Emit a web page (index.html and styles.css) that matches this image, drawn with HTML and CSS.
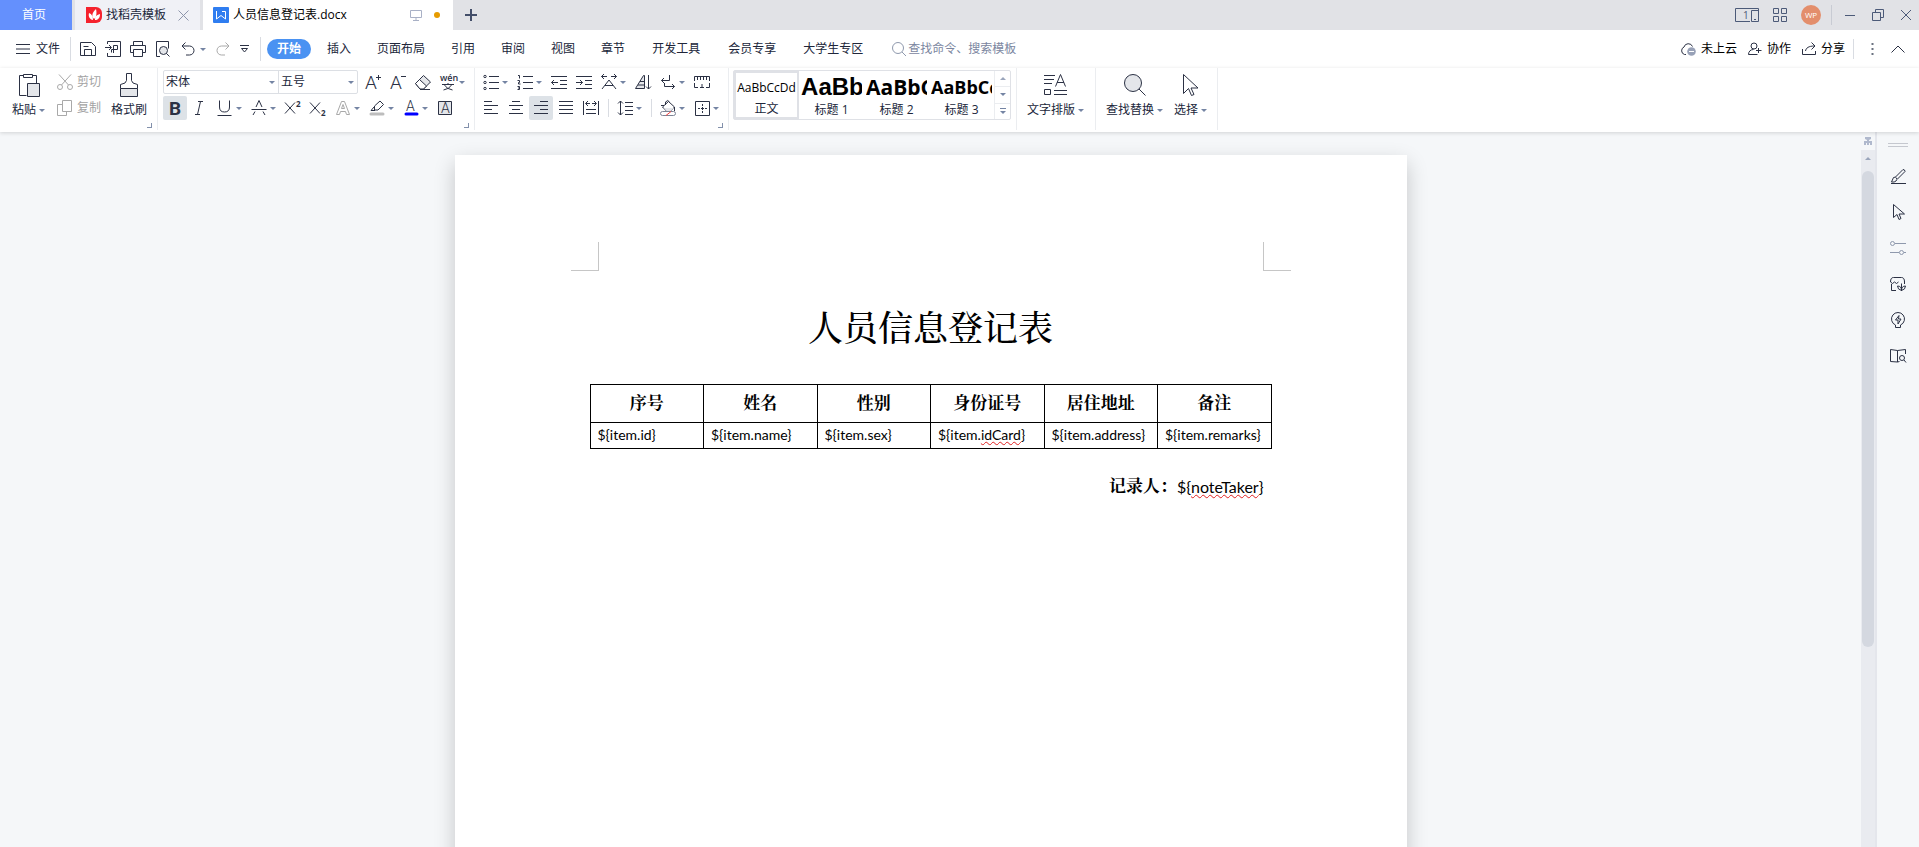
FILE: index.html
```html
<!DOCTYPE html>
<html lang="zh-CN">
<head>
  <meta charset="UTF-8" />
  <meta name="viewport" content="width=device-width, initial-scale=1.0" />
  <title>人员信息登记表.docx</title>
  <link rel="stylesheet" href="styles.css">
</head>
<body>
  <header class="titlebar">
    <button class="tab home">首页</button>
    <button class="tab template">
      <svg width="16" height="16" viewBox="0 0 16 16"><path d="M0 0h10a6 6 0 0 1 6 6v4a6 6 0 0 1-6 6H0z" fill="#f5222d"/><path d="M8 12C5 9 6.500 5 10 2c1 4 .5 8-2 10zM7 13C4 12.500 2 10 3 6c3 1 4 4 4 7zM9 13c0-3 1-5 5-6 0 4-2 6-5 6z" fill="#fff"/></svg>
      <span>找稻壳模板</span>
      <svg class="close" width="11" height="11" viewBox="0 0 11 11"><path d="M.5.5l10 10M10.500.5l-10 10" stroke="#8d95ab"/></svg>
    </button>
    <button class="tab active">
      <svg width="16" height="16" viewBox="0 0 16 16"><rect width="16" height="16" rx="1" fill="#2f7df0"/><path d="M3.500 4v8L8 8.500l4.500 3.500V4.500H9" fill="none" stroke="#fff"/></svg>
      <span class="name">人员信息登记表.docx</span>
      <svg width="12" height="12" viewBox="0 0 12 12" fill="none" stroke="#a9b1c6"><path d="M.5 1.500h11v7H.5zM6 8.500v3M3 11.500h6"/></svg>
      <i class="dot"></i>
    </button>
    <button class="plus" aria-label="新建"><svg width="12" height="12" viewBox="0 0 12 12"><path d="M6 0v12M0 6h12" stroke="#434e69" stroke-width="2"/></svg></button>
    <div class="window-tools">
      <svg width="24" height="14" viewBox="0 0 24 14" fill="none" stroke="#4c5a78"><path d="M15 13.500H.5V.5h23v13h-7v-11h7M19 11.500h2"/><text x="8" y="11" class="badge">1</text></svg>
      <svg width="14" height="14" viewBox="0 0 14 14" fill="none" stroke="#4c5a78"><path d="M.5.5h5v5h-5zM8.500.5h5v5h-5zM.5 8.500h5v5h-5zM8.500 8.500h5v5h-5z"/></svg>
      <span class="avatar">WP</span>
      <i class="line"></i>
      <button aria-label="最小化"><svg width="12" height="12" viewBox="0 0 12 12"><path d="M1 6.500h10" stroke="#4c5a78"/></svg></button>
      <button aria-label="还原"><svg width="12" height="12" viewBox="0 0 12 12" fill="none" stroke="#4c5a78"><path d="M.5 3.500h8v8h-8zM3.500 3V.5h8v8H9"/></svg></button>
      <button aria-label="关闭"><svg width="12" height="12" viewBox="0 0 12 12"><path d="M1 1l10 10M11 1L1 11" stroke="#4c5a78"/></svg></button>
    </div>
  </header>

  <nav class="menu">
    <button class="file"><svg width="14" height="10" viewBox="0 0 14 10"><path d="M0 .5h14M0 5h14M0 9.500h14"/></svg>文件</button>
    <i class="line"></i>
    <div class="quick">
      <button aria-label="保存"><svg width="16" height="16" viewBox="0 0 16 16"><path d="M.5 1.500h11l4 4v9H.5zM4.500 14.500v-6h7v6M3.500 5.500h5"/></svg></button>
      <button aria-label="输出为PDF"><svg width="16" height="16" viewBox="0 0 16 16"><path d="M2.500 3V.5h13v15h-13V12M0 6.500h6M4 4l2.500 2.500L4 9M8.500 12V4.500h4v4h-6v3"/></svg></button>
      <button aria-label="打印"><svg width="16" height="16" viewBox="0 0 16 16"><path d="M3.500 4.500v-4h9v4M3.500 11.500h-3v-7h15v7h-3M3.500 8.500h9v7h-9z"/></svg></button>
      <button aria-label="打印预览"><svg width="16" height="16" viewBox="0 0 16 16"><path d="M5 15.500H1.500V.5h12v7M11 12l3.500 3.500"/><circle cx="8.500" cy="9.500" r="4" fill="#e4e6ea"/></svg></button>
      <button aria-label="撤销" class="drop"><svg width="16" height="16" viewBox="0 0 16 16"><path d="M5.500 1.500L2 5l3.500 3.500M2 5h7.500a4.500 4.500 0 0 1 0 9H6"/></svg></button>
      <button aria-label="恢复"><svg class="off" width="16" height="16" viewBox="0 0 16 16"><path d="M10.500 1.500L14 5l-3.500 3.500M14 5H6.500a4.500 4.500 0 0 0 0 9H10"/></svg></button>
      <button aria-label="自定义"><svg width="9" height="8" viewBox="0 0 9 8"><path d="M0 .5h9M1.500 3.500L4.500 7l3-3.500z"/></svg></button>
    </div>
    <i class="line"></i>
    <div class="tabs">
      <button class="on">开始</button>
      <button>插入</button>
      <button>页面布局</button>
      <button>引用</button>
      <button>审阅</button>
      <button>视图</button>
      <button>章节</button>
      <button class="wide">开发工具</button>
      <button class="wide">会员专享</button>
      <button>大学生专区</button>
    </div>
    <label class="search">
      <svg class="lens" width="14" height="14" viewBox="0 0 14 14"><circle cx="6" cy="6" r="5.500"/><path d="M10 10l4 4"/></svg>
      <input type="text" placeholder="查找命令、搜索模板" aria-label="查找命令、搜索模板">
    </label>
    <div class="account">
      <button><svg width="16" height="14" viewBox="0 0 16 14"><path d="M6 12.500H4.500a4 4 0 0 1-.5-7.500 4.500 4.500 0 0 1 8.500-.5"/><circle cx="11.500" cy="9.500" r="4.300" fill="#98a1b7" stroke="none"/><path d="M9 9.500h5" class="white"/></svg>未上云</button>
      <button><svg width="14" height="14" viewBox="0 0 14 14"><circle cx="6" cy="4" r="3"/><path d="M9.500 12.500h-9c0-3 2-5 5-5M8 8.500h5.500M10.500 6v5"/></svg>协作</button>
      <button><svg width="14" height="14" viewBox="0 0 14 14"><path d="M.5 7v5.500h13V9M3.500 9c.5-3 3-5 9-5M9.500.5L13 4 9.500 7.500"/></svg>分享</button>
      <i class="line"></i>
      <button aria-label="更多"><svg width="3" height="12" viewBox="0 0 3 12"><path d="M.5 0h2v2h-2zM.5 5h2v2h-2zM.5 10h2v2h-2z" fill="#6b7280" stroke="none"/></svg></button>
      <button aria-label="收起功能区"><svg width="14" height="8" viewBox="0 0 14 8"><path d="M.5 7.500L7 1l6.500 6.500"/></svg></button>
    </div>
  </nav>

  <section class="ribbon">
    <div class="group clipboard">
      <button class="big">
        <svg width="24" height="24" viewBox="0 0 24 24"><path d="M9.500 22.500h-7v-20h4M15.500 2.500h4v8M6.500 1.500h9v3h-9z"/><path d="M10.500 10.500h12v13h-12z" fill="#e4e6ea"/></svg>
        <span class="drop">粘贴</span>
      </button>
      <div class="stack">
        <button class="off"><svg class="off" width="16" height="16" viewBox="0 0 16 16"><path d="M2 .5l9.500 10.500M14 .5L4.500 11"/><circle cx="3" cy="13" r="2.500"/><circle cx="13" cy="13" r="2.500"/></svg>剪切</button>
        <button class="off"><svg class="off" width="16" height="16" viewBox="0 0 16 16"><path d="M5.500.5h9v11h-9zM5 4.500H.5v11h9V12"/></svg>复制</button>
      </div>
      <button class="big">
        <svg width="18" height="24" viewBox="0 0 18 24"><path d="M.5 15.500h17v8H.5z" fill="#e4e6ea"/><path d="M.5 15.500v-4q6-1 6-4v-7h5v7q0 3 6 4v4"/></svg>
        <span>格式刷</span>
      </button>
      <i class="corner"></i>
    </div>

    <div class="group font">
      <div class="row">
        <div class="combo">
          <span class="pick family"><select aria-label="字体"><option>宋体</option></select></span>
          <span class="pick size"><select aria-label="字号"><option>五号</option></select></span>
        </div>
        <button class="tool" aria-label="增大字号"><svg width="16" height="16" viewBox="0 0 16 16"><text x="0" y="15" class="thin">A</text><path d="M11 3.500h5M13.500 1v5"/></svg></button>
        <button class="tool" aria-label="减小字号"><svg width="16" height="16" viewBox="0 0 16 16"><text x="0" y="15" class="thin">A</text><path d="M11 2.500h5"/></svg></button>
        <button class="tool" aria-label="清除格式"><svg width="16" height="16" viewBox="0 0 16 16"><path d="M.5 9.500l8-8 7 6.500-7 7H5z" fill="#e4e6ea"/><path d="M.5 9.500l4-4 7 6.500-3 3H5z" fill="#fff"/><path d="M5 15.500h10"/></svg></button>
        <button class="tool drop" aria-label="拼音指南"><svg width="16" height="16" viewBox="0 0 16 16"><text x="0" y="7" class="pinyin">wén</text><path d="M2 10.500h12M8 9v2M4.500 11q2 4 8 5M11.500 11q-2 4-8 5"/></svg></button>
      </div>
      <div class="row">
        <button class="tool on" aria-label="加粗"><svg width="16" height="16" viewBox="0 0 16 16"><text x="2" y="15" class="bold">B</text></svg></button>
        <button class="tool" aria-label="倾斜"><svg width="16" height="16" viewBox="0 0 16 16"><path d="M6 1.500h5M3 14.500h5M8.500 1.500l-3 13"/></svg></button>
        <button class="tool drop" aria-label="下划线"><svg width="16" height="16" viewBox="0 0 16 16"><path d="M2.500.5V7q0 5 5 5t5-5V.5M.5 15.500h14"/></svg></button>
        <button class="tool drop" aria-label="删除线"><svg width="16" height="16" viewBox="0 0 16 16"><path d="M5 7l3-6.500L11 7M.5 9.500h15M4 11.500l-2 3.500M12 11.500l2 3.500"/></svg></button>
        <button class="tool" aria-label="上标"><svg width="18" height="16" viewBox="0 0 18 16"><path d="M1 2.500l10 11M11 2.500L1 13.500"/><text x="12" y="7" class="script">2</text></svg></button>
        <button class="tool" aria-label="下标"><svg width="18" height="16" viewBox="0 0 18 16"><path d="M1 2.500l10 11M11 2.500L1 13.500"/><text x="12" y="16" class="script">2</text></svg></button>
        <button class="tool drop" aria-label="文字效果"><svg class="off" width="16" height="16" viewBox="0 0 16 16"><path d="M1.500 14.500l5-13h3l5 13h-3l-1-3h-5l-1 3zM6.500 8.500h3L8 4.500z"/></svg></button>
        <button class="tool drop" aria-label="突出显示"><svg width="16" height="16" viewBox="0 0 16 16"><path d="M5.500 6l5.500-5 3.500 3.500L9 10H5.500zM5 7l-3 3.500h4"/><path d="M2 14h12" class="gray-bar"/></svg></button>
        <button class="tool drop" aria-label="字体颜色"><svg width="16" height="16" viewBox="0 0 16 16"><text x="3" y="11" class="thin mid">A</text><path d="M3 14h11" class="blue-bar"/></svg></button>
        <button class="tool" aria-label="字符底纹"><svg width="16" height="16" viewBox="0 0 16 16"><path d="M1.500 1.500h13v13h-13z" fill="#e4e6ea"/><text x="4" y="13" class="thin mid">A</text></svg></button>
      </div>
      <i class="corner"></i>
    </div>

    <div class="group para">
      <div class="row">
        <button class="tool drop" aria-label="项目符号"><svg width="16" height="16" viewBox="0 0 16 16"><path d="M6 2.500h10M6 8.500h10M6 14.500h10"/><circle cx="2" cy="2.500" r="1.200"/><circle cx="2" cy="8.500" r="1.200"/><circle cx="2" cy="14.500" r="1.200"/></svg></button>
        <button class="tool drop" aria-label="编号"><svg width="16" height="16" viewBox="0 0 16 16"><path d="M6 2.500h10M6 8.500h10M6 14.500h10M1 1.500h1.500v3M.5 6.500h2v2h-1v1.500h2M.5 12.500h2v3h-2M1 14h1.500"/></svg></button>
        <button class="tool" aria-label="减少缩进"><svg width="16" height="16" viewBox="0 0 16 16"><path d="M0 2.500h16M9 6.500h7M9 10.500h7M0 14.500h16M.5 8.500H7M3 6L.5 8.500 3 11"/></svg></button>
        <button class="tool" aria-label="增加缩进"><svg width="16" height="16" viewBox="0 0 16 16"><path d="M0 2.500h16M9 6.500h7M9 10.500h7M0 14.500h16M0 8.500h6.500M4 6l2.500 2.500L4 11"/></svg></button>
        <button class="tool drop" aria-label="中文版式"><svg width="16" height="16" viewBox="0 0 16 16"><path d="M1 15l7-9 7 9M4 11.500h8M6 2.500H.5M3 0L.5 2.500 3 5M10 2.500h5.500M13 0l2.500 2.500L13 5"/></svg></button>
        <button class="tool" aria-label="排序"><svg width="16" height="16" viewBox="0 0 16 16"><path d="M.5 14.500l8-13h1v13zM5 7.500h4.500M3 11h6.500" fill="#e4e6ea"/><path d="M13.500 1v14M11 12.500l2.500 2.500 2.500-2.500"/></svg></button>
        <button class="tool drop" aria-label="显示段落标记"><svg width="16" height="16" viewBox="0 0 16 16"><path d="M9.500 1v5.500h-8M4 4L1.500 6.500 4 9M4.500 9v3.500h10M12 10l2.500 2.500L12 15"/></svg></button>
        <button class="tool" aria-label="制表位"><svg width="16" height="16" viewBox="0 0 16 16"><path d="M.5 7V2.500h15V7M3.500 3v3M6.500 3v3M9.500 3v3M12.500 3v3M.5 9v4.500H4M6 13.500h4M8 10v3M12 13.500h3.500V9"/></svg></button>
      </div>
      <div class="row">
        <button class="tool" aria-label="左对齐"><svg width="14" height="14" viewBox="0 0 14 14"><path d="M0 .5h8M0 4.500h14M0 8.500h8M0 12.500h14"/></svg></button>
        <button class="tool" aria-label="居中对齐"><svg width="14" height="14" viewBox="0 0 14 14"><path d="M3 .5h8M0 4.500h14M3 8.500h8M0 12.500h14"/></svg></button>
        <button class="tool on" aria-label="右对齐"><svg width="14" height="14" viewBox="0 0 14 14"><path d="M6 .5h8M0 4.500h14M6 8.500h8M0 12.500h14"/></svg></button>
        <button class="tool" aria-label="两端对齐"><svg width="14" height="14" viewBox="0 0 14 14"><path d="M0 .5h14M0 4.500h14M0 8.500h14M0 12.500h14"/></svg></button>
        <button class="tool" aria-label="分散对齐"><svg width="16" height="16" viewBox="0 0 16 16"><path d="M.5 1v14M15.500 1v14M3 9.500h10M3 13.500h10M3 3.500h4M9 3.500h4M5 1L2.500 3.500 5 6M11 1l2.500 2.500L11 6"/></svg></button>
        <i class="mini"></i>
        <button class="tool drop" aria-label="行距"><svg width="16" height="16" viewBox="0 0 16 16"><path d="M3.500 1v14M1 3.500L3.500 1 6 3.500M1 12.500L3.500 15 6 12.500M8 2.500h8M8 6.500h8M8 10.500h8M8 14.500h8"/></svg></button>
        <i class="mini"></i>
        <button class="tool drop" aria-label="底纹颜色"><svg width="16" height="16" viewBox="0 0 16 16"><path d="M2.500 7L8.500 1.500l6 5.500-4 4h-4z" fill="#fff"/><path d="M4 8h10l-3.500 3h-4z" fill="#e4e6ea" stroke="none"/><path d="M5.500 5V2q2.500-3 4 0M1 5.500h3M14.500 7v4"/><rect x=".5" y="11.500" width="15" height="4" rx="2" fill="#fff" class="slate"/><path d="M6 15.500l5-4" class="red"/></svg></button>
        <button class="tool drop" aria-label="边框"><svg width="16" height="16" viewBox="0 0 16 16"><path d="M1.500 1.500h14v14h-14zM8.500 4v2M8.500 7v3M8.500 11v2M4 8.500h2M7 8.500h3M11 8.500h2"/></svg></button>
      </div>
      <i class="corner"></i>
    </div>

    <div class="group styles">
      <div class="gallery">
        <button class="style on"><span class="sample">AaBbCcDd</span><span>正文</span></button>
        <button class="style"><span class="sample h1">AaBb</span><span>标题 1</span></button>
        <button class="style"><span class="sample h2">AaBbC</span><span>标题 2</span></button>
        <button class="style"><span class="sample h3">AaBbCc</span><span>标题 3</span></button>
        <div class="spin">
          <button class="up" aria-label="上一行"></button>
          <button class="down" aria-label="下一行"></button>
          <button class="down more" aria-label="更多样式"></button>
        </div>
      </div>
    </div>

    <div class="group layout">
      <button class="big">
        <svg width="24" height="24" viewBox="0 0 24 24"><path d="M0 2.500h11M0 6.500h10M0 10.500h8M.5 16.500h6v5h-6zM10 17.500h13M10 21.500h13M11.500 13.500l5-12 5 12M13 9.500h7"/></svg>
        <span class="drop">文字排版</span>
      </button>
    </div>

    <div class="group find">
      <button class="big">
        <svg width="24" height="24" viewBox="0 0 24 24"><circle cx="10" cy="10" r="8.500" fill="#e4e6ea"/><path d="M16 16l6.500 6.500"/></svg>
        <span class="drop">查找替换</span>
      </button>
      <button class="big">
        <svg width="24" height="24" viewBox="0 0 24 24"><path d="M4.500 1.500v19l5-5 3 7 2.500-1-3-6.500h7z"/></svg>
        <span class="drop">选择</span>
      </button>
    </div>
  </section>

  <main class="workspace">
    <div class="canvas">
      <article class="page">
        <div class="marks"><i class="mark left"></i><i class="mark right"></i></div>
        <h1>人员信息登记表</h1>
        <table>
          <tr>
            <th>序号</th>
            <th>姓名</th>
            <th>性别</th>
            <th>身份证号</th>
            <th>居住地址</th>
            <th>备注</th>
          </tr>
          <tr>
            <td>${item.id}</td>
            <td>${item.name}</td>
            <td>${item.sex}</td>
            <td>${item.<span class="typo">idCard</span>}</td>
            <td>${item.address}</td>
            <td>${item.remarks}</td>
          </tr>
        </table>
        <p class="recorder"><b>记录人：</b>${<span class="typo">noteTaker</span>}</p>
      </article>
    </div>
    <div class="scroll">
      <svg width="8" height="8" viewBox="0 0 8 8" fill="#b0b9cd"><path d="M1 0h6v2L5 3v1h3v4H6V6H5v2H3V6H2v2H0V4h3V3L1 2z"/></svg>
      <div class="track"><i class="up"></i><div class="thumb"></div></div>
    </div>
    <aside class="side">
      <i class="grip"></i>
      <button aria-label="样式"><svg width="16" height="16" viewBox="0 0 16 16"><path d="M1 15.500h15M1.500 14l2-4.500q2-1 3 .5t-.5 3-4.500 1zM5.500 9l7.500-7.500q2 0 2 2L7.500 11"/></svg></button>
      <button aria-label="选择"><svg width="16" height="16" viewBox="0 0 16 16"><path d="M3.500.5v13l3.500-3 2 5 2-1-2-4.500h5.500z"/></svg></button>
      <button aria-label="属性"><svg class="pale" width="16" height="16" viewBox="0 0 16 16"><circle cx="2.500" cy="3.500" r="2"/><circle cx="11.500" cy="12.500" r="2"/><path d="M5 3.500h11M0 12.500h9M14 12.500h2"/></svg></button>
      <button aria-label="稻壳"><svg width="16" height="16" viewBox="0 0 16 16"><path d="M.5 6q0-4.500 3-4.500h8q3 0 3 4.500M.5 6q2 3 4 0 2 3 4 0M1.500 8v6.500H6M14.500 5v3"/><path d="M11.500 15V7.500M11.500 14.500q-4-1-4-4.500 4 0 4 4.500 0-4.500 4-4.500 0 3.500-4 4.500"/></svg></button>
      <button aria-label="帮助"><svg width="16" height="16" viewBox="0 0 16 16"><path d="M5.500 15.500V13a6.500 6.500 0 1 1 5 0v2.500zM9 3.500L5.500 8H8v4l3-5H8.500z"/></svg></button>
      <button aria-label="阅读"><svg width="16" height="16" viewBox="0 0 16 16"><path d="M7.500 14l-7-.5V1.500l7 1zM7.500 2.500l8-1V6M7.500 14l2-.5"/><circle cx="12" cy="10" r="2.500"/><path d="M14 12l2 2.500"/></svg></button>
    </aside>
  </main>
</body>
</html>
```
FILE: styles.css
```css
* {
  box-sizing: border-box;
}
body {
  margin: 0;
  height: 100vh;
  display: flex;
  flex-direction: column;
  overflow: hidden;
  font-family: "Open Sans", "Noto Sans CJK SC", sans-serif;
  font-size: 12px;
  line-height: 16px;
  color: #20263a;
  background: #fff;
}
button, select, input {
  font: inherit;
  color: inherit;
  background: none;
  border: 0;
  padding: 0;
  margin: 0;
}
button {
  display: flex;
  align-items: center;
  flex: none;
  white-space: nowrap;
}
svg {
  flex: none;
  display: block;
  overflow: visible;
}
.menu svg, .ribbon svg, .side svg {
  fill: none;
  stroke: #2b3144;
}
.ribbon svg.off, .menu svg.off {
  stroke: #a9a9a9;
}
.side svg.pale, .menu svg.lens {
  stroke: #8f99ad;
}
.white {
  stroke: #fff;
}
.slate {
  stroke: #7d8496;
}
.red {
  stroke: #f04040;
}
.line {
  width: 1px;
  height: 24px;
  background: #d9dce2;
}

/* title bar */
.titlebar {
  display: flex;
  align-items: center;
  height: 30px;
  background: #e1e2e6;
}
.tab {
  height: 30px;
}
.home {
  width: 72px;
  padding-right: 4px;
  justify-content: center;
  color: #fff;
  background: #6490fd;
}
.template {
  width: 125px;
  margin: 0 3px;
  padding: 0 11px;
  gap: 4px;
  background: #f0f1f6;
}
.template .close {
  margin-left: auto;
}
.active {
  width: 250px;
  padding: 0 13px 0 10px;
  gap: 4px;
  color: #000;
  background: #fff;
}
.active .name {
  flex: 1;
  text-align: left;
}
.dot {
  width: 6px;
  height: 6px;
  margin-left: 8px;
  border-radius: 50%;
  background: #e69b00;
}
.plus {
  margin-left: 12px;
}
.window-tools {
  display: flex;
  align-items: center;
  margin-left: auto;
  padding-right: 7px;
}
.window-tools > svg {
  margin-right: 14px;
}
.badge {
  font-size: 10px;
  fill: #4c5a78;
  stroke: none;
}
.avatar {
  width: 20px;
  height: 20px;
  line-height: 20px;
  border-radius: 50%;
  font-size: 8px;
  text-align: center;
  color: #fff;
  background: #e38e6c;
}
.window-tools .line {
  height: 20px;
  margin-left: 10px;
  background: #c8cbd3;
}
.window-tools button {
  margin-left: 12px;
}
.window-tools button + button {
  margin-left: 16px;
}

/* menu row */
.menu {
  display: flex;
  align-items: center;
  height: 38px;
  padding: 0 14px 0 16px;
}
.file {
  gap: 6px;
  margin-right: 10px;
}
.quick {
  display: flex;
  align-items: center;
  gap: 9px;
  padding: 0 11px 0 9px;
}
.tabs {
  display: flex;
  margin-left: 6px;
}
.tabs button {
  padding: 0 13px;
}
.tabs .wide {
  padding: 0 14px;
}
.tabs .on {
  height: 20px;
  margin-right: 3px;
  padding: 0 10px;
  border-radius: 10px;
  color: #fff;
  font-weight: bold;
  background: #4a92f2;
}
.search {
  display: flex;
  align-items: center;
  gap: 2px;
  margin-left: 16px;
}
.search input {
  width: 120px;
}
.search input::placeholder {
  color: #7b86a0;
  opacity: 1;
}
.account {
  display: flex;
  align-items: center;
  gap: 8px;
  margin-left: auto;
  color: #000;
}
.account button {
  gap: 5px;
}
.account button + button {
  margin-left: 3px;
}
.account .line {
  height: 20px;
  margin-right: 9px;
}
.account .line + button {
  margin-right: 6px;
}

/* ribbon */
.ribbon {
  display: flex;
  height: 64px;
  position: relative;
  z-index: 1;
  background: #fff;
  box-shadow: 0 1px 4px rgba(0, 0, 0, .15);
}
.group {
  position: relative;
  height: 62px;
  padding-top: 2px;
  border-right: 1px solid #ebedf0;
}
.corner {
  position: absolute;
  right: 5px;
  bottom: 2px;
  width: 5px;
  height: 5px;
  border-right: 1px solid #8290ab;
  border-bottom: 1px solid #8290ab;
}
.clipboard {
  display: flex;
  gap: 10px;
  padding-left: 12px;
  padding-right: 10px;
}
.big {
  flex-direction: column;
  gap: 5px;
  padding-top: 3px;
}
.stack {
  display: flex;
  flex-direction: column;
  gap: 10px;
  padding: 4px 0 0 2px;
}
.stack button {
  gap: 4px;
}
.off {
  color: #a3a3a3;
}
.drop {
  display: flex;
  align-items: center;
}
.drop::after {
  content: "";
  margin-left: 3px;
  border: 3px solid transparent;
  border-top-color: #7484a3;
  border-bottom: 0;
}
.quick .drop::after {
  margin-left: 4px;
}
.font, .para {
  display: flex;
  flex-direction: column;
  gap: 2px;
  padding-left: 5px;
  padding-right: 5px;
}
.para {
  padding-left: 4px;
}
.row {
  display: flex;
  align-items: center;
  gap: 1px;
  height: 24px;
}
.tool {
  width: 24px;
  height: 24px;
  justify-content: center;
}
.tool.drop {
  width: 33px;
  padding-left: 4px;
  justify-content: flex-start;
}
.tool.on {
  border-radius: 2px;
  background: #dde2e7;
}
.mini {
  width: 1px;
  height: 18px;
  margin: 0 3px 0 4px;
  background: #d9dce2;
}
.combo {
  display: flex;
  width: 195px;
  height: 24px;
  margin-right: 2px;
  border: 1px solid #dcdfe4;
  border-radius: 2px;
}
.pick {
  position: relative;
  display: flex;
  flex: 1;
}
.family {
  flex: 0 0 115px;
  border-right: 1px solid #dcdfe4;
}
.pick select {
  width: 100%;
  padding-left: 2px;
  appearance: none;
}
.pick::after {
  content: "";
  position: absolute;
  right: 3px;
  top: 10px;
  border: 3px solid transparent;
  border-top-color: #7484a3;
  border-bottom: 0;
}
.thin, .pinyin, .bold, .script {
  fill: #2b3144;
  stroke: none;
}
.thin {
  font-family: Roboto, sans-serif;
  font-size: 19px;
  font-weight: 300;
}
.thin.mid {
  font-size: 14px;
}
.pinyin {
  font-size: 9px;
  font-weight: 600;
}
.bold {
  font-family: Roboto, sans-serif;
  font-size: 19px;
  font-weight: bold;
}
.script {
  font-size: 8px;
  font-weight: bold;
}
.gray-bar, .blue-bar {
  stroke: #bdbdbd;
  stroke-width: 3;
  stroke-linecap: round;
}
.blue-bar {
  stroke: #0000ff;
}
.styles {
  padding-left: 4px;
  padding-right: 5px;
}
.gallery {
  display: flex;
  height: 50px;
  border: 1px solid #dfe1e6;
  border-radius: 2px;
}
.style {
  width: 65px;
  flex-direction: column;
  justify-content: flex-end;
  padding: 0 2px 1px;
  overflow: hidden;
}
.style.on {
  border: 2px solid #dfe1e6;
  padding: 0;
}
.sample {
  width: 100%;
  height: 30px;
  line-height: 30px;
  overflow: hidden;
  text-align: left;
  color: #000;
}
.style.on .sample {
  text-align: center;
}
.h1, .h2, .h3 {
  font-family: "Liberation Sans", sans-serif;
  font-weight: bold;
}
.h1 {
  font-size: 24px;
}
.h2, .h3 {
  font-family: "Open Sans", sans-serif;
  font-size: 21px;
}
.h3 {
  font-size: 18px;
}
.spin {
  display: flex;
  flex-direction: column;
  width: 16px;
  border-left: 1px solid #ebedf0;
}
.spin button {
  flex: 1;
  flex-direction: column;
  justify-content: center;
  gap: 2px;
}
.spin button + button {
  border-top: 1px solid #ebedf0;
}
.up::after, .down::after {
  content: "";
  border: 3px solid transparent;
  border-bottom: 3px solid #9aa5bb;
  border-top: 0;
}
.down::after {
  border-bottom: 0;
  border-top: 3px solid #7484a3;
}
.more::before {
  content: "";
  width: 6px;
  height: 1px;
  background: #7484a3;
}
.layout {
  padding-left: 10px;
  padding-right: 11px;
}
.find {
  display: flex;
  gap: 11px;
  padding-left: 10px;
  padding-right: 10px;
}

/* document */
.workspace {
  flex: 1;
  display: flex;
  min-height: 0;
  background: #f5f7f9;
}
.canvas {
  flex: 1;
  display: flex;
  justify-content: center;
  padding-top: 23px;
  overflow: hidden;
}
.page {
  width: 952px;
  height: 1346px;
  flex: none;
  padding: 87px 116px 0;
  color: #000;
  background: #fff;
  box-shadow: 0 8px 20px rgba(0, 0, 0, .2);
}
.marks {
  display: flex;
  justify-content: space-between;
}
.mark {
  width: 28px;
  height: 29px;
  border-bottom: 1px solid #c6c6c6;
}
.mark.left {
  border-right: 1px solid #c6c6c6;
}
.mark.right {
  border-left: 1px solid #c6c6c6;
}
h1 {
  margin: 30px 0 33px;
  font-family: SimSun, "Noto Serif CJK SC", "Noto Sans CJK SC", serif;
  font-size: 35px;
  line-height: 50px;
  font-weight: 500;
  text-align: center;
}
table {
  width: 682px;
  margin: 0 auto;
  table-layout: fixed;
  border-collapse: collapse;
}
td, th {
  border: 1px solid #000;
  padding: 0 7px;
  text-align: left;
}
th {
  height: 38px;
  padding-bottom: 4px;
  font-family: SimSun, "Noto Serif CJK SC", "Noto Sans CJK SC", serif;
  font-size: 17px;
  text-align: center;
}
td {
  height: 26px;
  padding-bottom: 2px;
  font-family: Lato, sans-serif;
  font-size: 14px;
}
.recorder {
  display: flex;
  justify-content: flex-end;
  margin: 26px 0 0;
  padding-right: 27px;
  font-family: Lato, sans-serif;
  font-size: 16px;
  line-height: 24px;
}
.recorder b {
  font-family: SimSun, "Noto Serif CJK SC", "Noto Sans CJK SC", serif;
  font-size: 17px;
  line-height: 20px;
}
.typo {
  text-decoration: underline wavy #e02020 1px;
  text-underline-offset: 1px;
}
.scroll {
  width: 14px;
  display: flex;
  flex-direction: column;
  align-items: center;
  padding-top: 5px;
}
.track {
  flex: 1;
  width: 14px;
  margin-top: 5px;
  padding: 7px 1px 0;
  background: #e9ebf0;
}
.track .up {
  display: flex;
  justify-content: center;
}
.thumb {
  height: 69%;
  margin-top: 11px;
  border-radius: 6px;
  background: #d4d8e0;
}
.side {
  width: 44px;
  display: flex;
  flex-direction: column;
  align-items: center;
  gap: 20px;
  padding-top: 11px;
  border-left: 2px solid #e4e6ec;
}
.grip {
  width: 20px;
  height: 4px;
  margin-bottom: 1px;
  border-top: 1px solid #c5c8cf;
  border-bottom: 1px solid #c5c8cf;
}
```
